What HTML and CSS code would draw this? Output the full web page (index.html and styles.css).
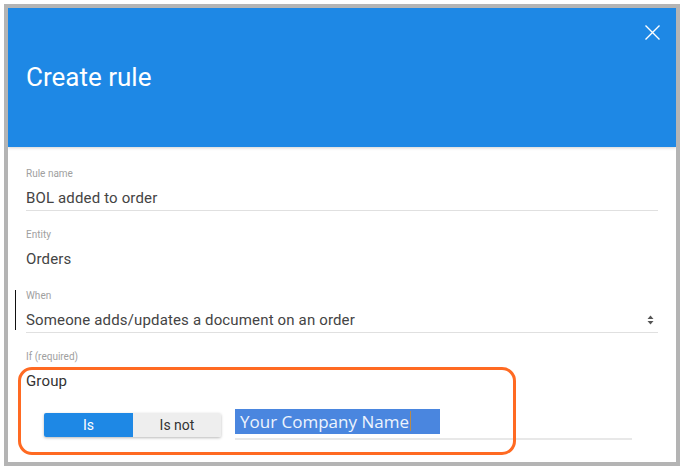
FILE: index.html
```html
<!DOCTYPE html>
<html>
<head>
<meta charset="utf-8">
<link rel="stylesheet" href="styles.css">
</head>
<body>
<div class="frame">
  <header class="header">
    <button class="close" aria-label="Close">
      <svg width="15" height="15" viewBox="0 0 15 15"><path d="M0.5 0.5L14.5 14.5M14.5 0.5L0.5 14.5" stroke="#fff" stroke-width="1.4" fill="none"/></svg>
    </button>
    <h1 class="title">Create rule</h1>
  </header>
  <div class="content">
    <div class="field underlined">
      <div class="label">Rule name</div>
      <div class="value">BOL added to order</div>
    </div>
    <div class="field">
      <div class="label">Entity</div>
      <div class="value">Orders</div>
    </div>
    <div class="field underlined">
      <div class="label">When</div>
      <div class="value select">
        <span>Someone adds/updates a document on an order</span>
        <svg class="arrows" width="7" height="10" viewBox="0 0 7 10"><path d="M0.5 4L3.5 0.5L6.5 4Z M0.5 6L3.5 9.5L6.5 6Z" fill="#555"/></svg>
      </div>
    </div>
    <div class="field cond">
      <div class="label">If (required)</div>
      <div class="value group">Group</div>
      <div class="cond-row">
        <div class="toggle">
          <span class="opt on">Is</span>
          <span class="opt">Is not</span>
        </div>
        <div class="text-input">
          <span class="sel">Your Company Name<span class="caret"></span></span>
        </div>
      </div>
    </div>
  </div>
  <div class="annot"></div>
  <div class="cursor"></div>
</div>
</body>
</html>
```

FILE: styles.css
```css
html, body {
  margin: 0;
  padding: 0;
  background: #ffffff;
}
body {
  font-family: Roboto, "Liberation Sans", Arial, sans-serif;
}
.frame {
  position: relative;
  margin: 4px;
  width: 668px;
  height: 454px;
  border: 4px solid #b4b4b4;
  background: #ffffff;
  overflow: hidden;
}
.header {
  height: 139px;
  box-sizing: border-box;
  background: #1e88e5;
  display: flex;
  flex-direction: column;
  box-shadow: 0 1px 3px rgba(0, 0, 0, 0.18);
  position: relative;
  z-index: 1;
}
.close {
  align-self: flex-end;
  margin: 17px 16px 0 0;
  width: 15px;
  height: 15px;
  padding: 0;
  border: 0;
  background: transparent;
  display: block;
}
.close svg {
  display: block;
}
.title {
  margin: 22px 0 0 18px;
  font-size: 26px;
  line-height: 30px;
  font-weight: 400;
  color: #ffffff;
}
.content {
  padding: 21px 18px 0 18px;
}
.field {
  margin-bottom: 18px;
}
.label {
  font-size: 10px;
  line-height: 12px;
  color: #a0a0a0;
}
.value {
  margin-top: 8px;
  font-size: 15px;
  line-height: 20px;
  letter-spacing: 0.15px;
  color: #444444;
  padding-bottom: 2px;
  border-bottom: 1px solid transparent;
}
.underlined .value {
  border-bottom-color: #e0e0e0;
}
.select {
  display: flex;
  justify-content: space-between;
  align-items: center;
  padding-right: 4px;
}
.arrows {
  display: block;
}
.group {
  color: #333333;
  border-bottom: 0;
  padding-bottom: 0;
}
.cond-row {
  display: flex;
  align-items: flex-start;
  margin-top: 18px;
}
.toggle {
  display: flex;
  margin: 4px 0 0 18px;
  height: 24px;
  border-radius: 2px;
  box-shadow: 0 1px 3px rgba(0, 0, 0, 0.28);
  overflow: hidden;
}
.opt {
  display: flex;
  align-items: center;
  justify-content: center;
  width: 88px;
  font-size: 14px;
  color: #333333;
  background: #eeeeee;
}
.opt.on {
  width: 89px;
  background: #1e88e5;
  color: #ffffff;
}
.text-input {
  margin-left: 14px;
  width: 397px;
  height: 29px;
  border-bottom: 2px solid #e8e8e8;
}
.sel {
  display: inline-flex;
  box-sizing: border-box;
  width: 205px;
  height: 25px;
  padding-left: 5px;
  background: #4a86df;
  color: #eef4fd;
  font-family: "Open Sans", "Liberation Sans", sans-serif;
  font-size: 17px;
  line-height: 25px;
  white-space: nowrap;
}
.caret {
  display: inline-block;
  width: 1px;
  height: 20px;
  margin: 2px 0 0 1px;
  background: #b88a4a;
}
.annot {
  position: absolute;
  left: 10px;
  top: 359px;
  width: 498px;
  height: 88px;
  box-sizing: border-box;
  border: 3px solid #ff6a22;
  border-radius: 14px;
  pointer-events: none;
}
.cursor {
  position: absolute;
  left: 7px;
  top: 282px;
  width: 1px;
  height: 40px;
  background: #111111;
}
```
